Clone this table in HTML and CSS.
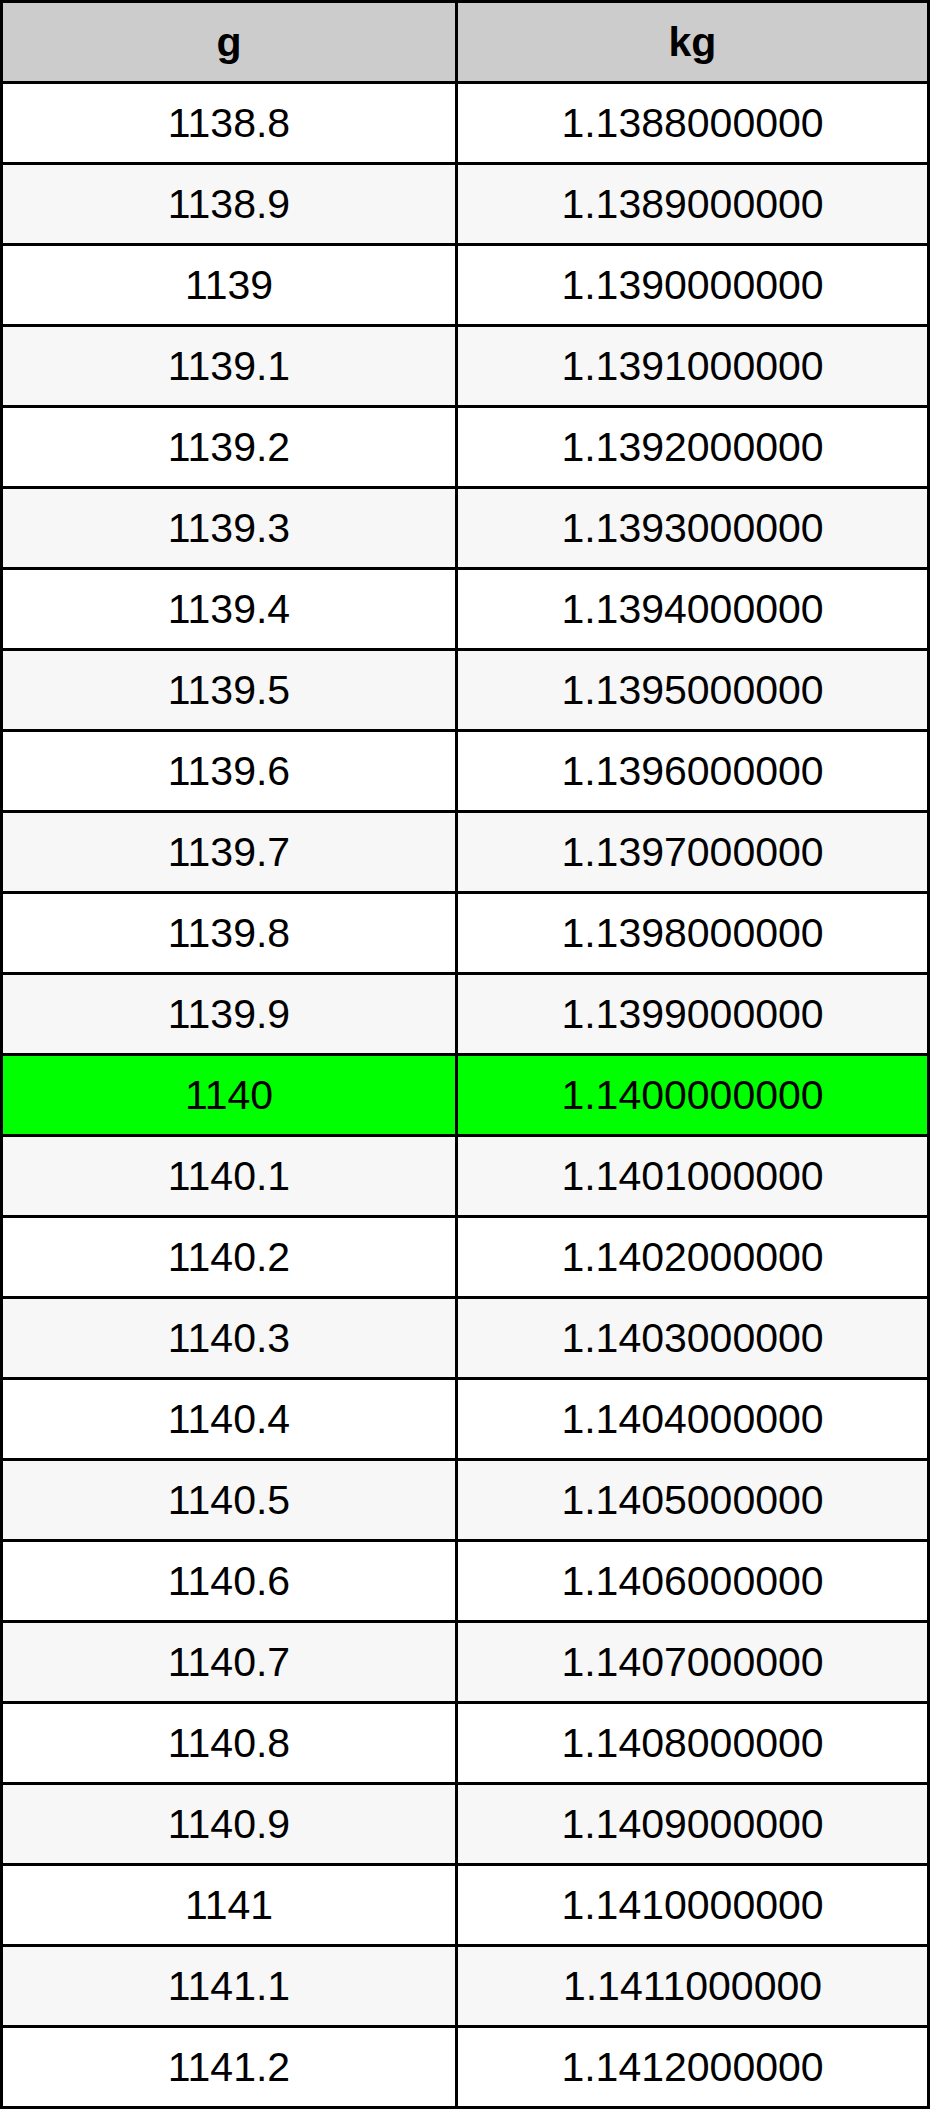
FILE: index.html
```html
<!DOCTYPE html>
<html>
<head>
<meta charset="utf-8">
<link rel="stylesheet" href="styles.css">
</head>
<body>
<div class="table">
  <div class="cell head">g</div><div class="cell head">kg</div>
  <div class="cell">1138.8</div><div class="cell">1.1388000000</div>
  <div class="cell alt">1138.9</div><div class="cell alt">1.1389000000</div>
  <div class="cell">1139</div><div class="cell">1.1390000000</div>
  <div class="cell alt">1139.1</div><div class="cell alt">1.1391000000</div>
  <div class="cell">1139.2</div><div class="cell">1.1392000000</div>
  <div class="cell alt">1139.3</div><div class="cell alt">1.1393000000</div>
  <div class="cell">1139.4</div><div class="cell">1.1394000000</div>
  <div class="cell alt">1139.5</div><div class="cell alt">1.1395000000</div>
  <div class="cell">1139.6</div><div class="cell">1.1396000000</div>
  <div class="cell alt">1139.7</div><div class="cell alt">1.1397000000</div>
  <div class="cell">1139.8</div><div class="cell">1.1398000000</div>
  <div class="cell alt">1139.9</div><div class="cell alt">1.1399000000</div>
  <div class="cell hi">1140</div><div class="cell hi">1.1400000000</div>
  <div class="cell alt">1140.1</div><div class="cell alt">1.1401000000</div>
  <div class="cell">1140.2</div><div class="cell">1.1402000000</div>
  <div class="cell alt">1140.3</div><div class="cell alt">1.1403000000</div>
  <div class="cell">1140.4</div><div class="cell">1.1404000000</div>
  <div class="cell alt">1140.5</div><div class="cell alt">1.1405000000</div>
  <div class="cell">1140.6</div><div class="cell">1.1406000000</div>
  <div class="cell alt">1140.7</div><div class="cell alt">1.1407000000</div>
  <div class="cell">1140.8</div><div class="cell">1.1408000000</div>
  <div class="cell alt">1140.9</div><div class="cell alt">1.1409000000</div>
  <div class="cell">1141</div><div class="cell">1.1410000000</div>
  <div class="cell alt">1141.1</div><div class="cell alt">1.1411000000</div>
  <div class="cell">1141.2</div><div class="cell">1.1412000000</div>
</div>
</body>
</html>
```

FILE: styles.css
```css
html, body {
  margin: 0;
  padding: 0;
  background: #ffffff;
}

.table {
  display: grid;
  grid-template-columns: 452px 469px;
  grid-auto-rows: 78px;
  gap: 3px;
  padding: 3px;
  width: 930px;
  box-sizing: border-box;
  background: #000000;
  font-family: "Liberation Sans", Arial, sans-serif;
  font-size: 41px;
  color: #000000;
}

.cell {
  display: flex;
  align-items: center;
  justify-content: center;
  background: #ffffff;
}

.cell.head {
  background: #cccccc;
  font-weight: bold;
}

.cell.alt {
  background: #f7f7f7;
}

.cell.hi {
  background: #00ff00;
}
```
